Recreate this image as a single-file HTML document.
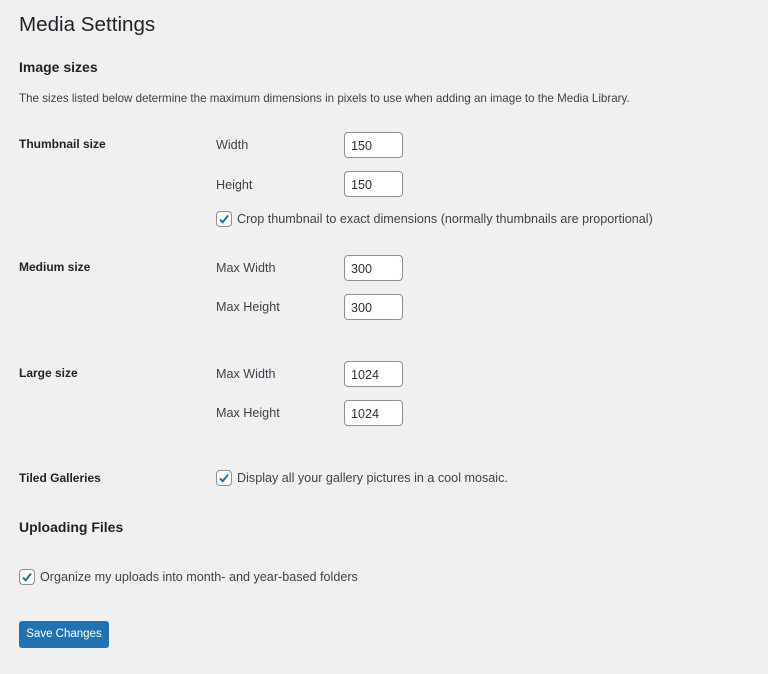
<!DOCTYPE html><html><head><style>
body{margin:0;background:#f0f0f1;width:768px;height:674px;position:relative;font-family:"Liberation Sans",sans-serif;color:#3c434a;overflow:hidden}
.a{position:absolute;white-space:nowrap;line-height:1}
.h{color:#1d2327}
.b{font-weight:bold;color:#1d2327;font-size:12px}
.l{font-size:12.6px}
.in{position:absolute;left:344px;width:57px;height:24px;border:1px solid #8c8f94;border-radius:4px;background:#fff;font-size:12.6px;color:#2c3338;box-sizing:content-box;line-height:26px;text-indent:6px}
.cb{position:absolute;width:14px;height:14px;border:1px solid #8c8f94;border-radius:4px;background:#fff}
.cb svg{position:absolute;left:0;top:0}
</style></head><body>
<div class="a h" style="left:19px;top:15px;font-size:20.6px">Media Settings</div>
<div class="a h" style="left:19px;top:60px;font-size:14px;font-weight:bold">Image sizes</div>
<div class="a" style="left:19px;top:93px;font-size:11.6px">The sizes listed below determine the maximum dimensions in pixels to use when adding an image to the Media Library.</div>

<div class="a b" style="left:19px;top:138px">Thumbnail size</div>
<div class="a l" style="left:216px;top:139px">Width</div><div class="in" style="top:132px">150</div>
<div class="a l" style="left:216px;top:179px">Height</div><div class="in" style="top:171px">150</div>
<div class="cb" style="left:216px;top:211px"><svg width="14" height="14" viewBox="0 0 14 14"><path d="M3 7.5l2.7 2.8L11 3.5" stroke="#2271b1" stroke-width="2" fill="none"/></svg></div>
<div class="a l" style="left:237px;top:213px">Crop thumbnail to exact dimensions (normally thumbnails are proportional)</div>

<div class="a b" style="left:19px;top:261px">Medium size</div>
<div class="a l" style="left:216px;top:262px">Max Width</div><div class="in" style="top:255px">300</div>
<div class="a l" style="left:216px;top:301px">Max Height</div><div class="in" style="top:294px">300</div>

<div class="a b" style="left:19px;top:367px">Large size</div>
<div class="a l" style="left:216px;top:368px">Max Width</div><div class="in" style="top:361px">1024</div>
<div class="a l" style="left:216px;top:407px">Max Height</div><div class="in" style="top:400px">1024</div>

<div class="a b" style="left:19px;top:472px">Tiled Galleries</div>
<div class="cb" style="left:216px;top:470px"><svg width="14" height="14" viewBox="0 0 14 14"><path d="M3 7.5l2.7 2.8L11 3.5" stroke="#2271b1" stroke-width="2" fill="none"/></svg></div>
<div class="a l" style="left:237px;top:472px">Display all your gallery pictures in a cool mosaic.</div>

<div class="a h" style="left:19px;top:520px;font-size:14px;font-weight:bold">Uploading Files</div>
<div class="cb" style="left:19px;top:569px"><svg width="14" height="14" viewBox="0 0 14 14"><path d="M3 7.5l2.7 2.8L11 3.5" stroke="#2271b1" stroke-width="2" fill="none"/></svg></div>
<div class="a l" style="left:40px;top:571px">Organize my uploads into month- and year-based folders</div>

<div style="position:absolute;left:19px;top:621px;width:90px;height:27px;background:#2271b1;border-radius:3px;color:#fff;font-size:11.5px;line-height:27px;text-align:center">Save Changes</div>
</body></html>
